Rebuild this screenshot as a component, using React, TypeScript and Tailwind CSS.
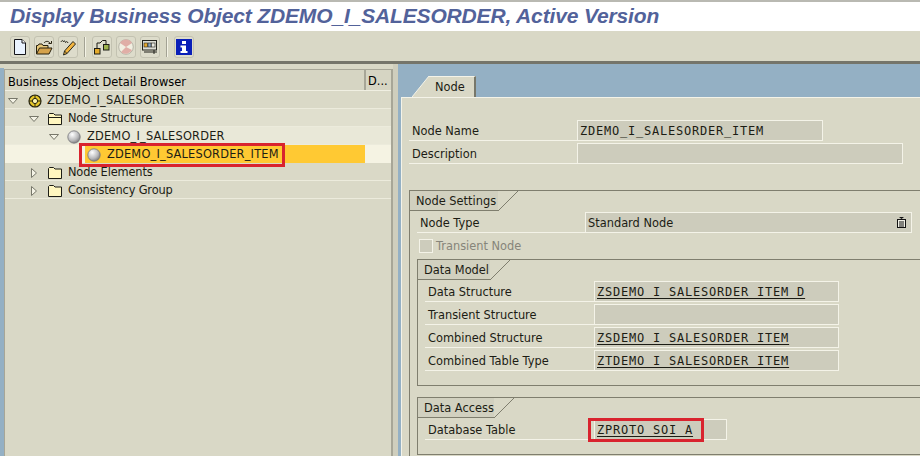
import type { ReactNode } from 'react';

const UI_FONT = "font-['DejaVu_Sans',sans-serif] text-[11.4px]";
const MONO_FONT = "font-['DejaVu_Sans_Mono',monospace] text-[12px] tracking-[0.78px]";

// small triangle used to open and close tree nodes
function Arrow({ open }: { open: boolean }) {
    return (
        <svg width="10" height="10" viewBox="0 0 10 10" className="shrink-0">
            {open ? (
                <path d="M0.5 2.5H9.5L5 7.5Z" fill="#f4f3e6" stroke="#77776a" />
            ) : (
                <path d="M2.5 0.5V9.5L7.5 5Z" fill="#f4f3e6" stroke="#77776a" />
            )}
        </svg>
    );
}

function FolderIcon({ open }: { open?: boolean }) {
    return (
        <svg width="16" height="14" viewBox="0 0 16 14" className="shrink-0">
            <path d="M1.5 12.5V2.5L2.5 1.5H6.5L8 3H14.5V12.5Z" fill="#fff6bf" stroke="#1d1d16" />
            {open && <path d="M1.5 5.5H14.5" stroke="#1d1d16" />}
        </svg>
    );
}

function BallIcon() {
    return (
        <svg width="14" height="14" viewBox="0 0 14 14" className="shrink-0">
            <defs>
                <radialGradient id="ball" cx="0.36" cy="0.3" r="0.8">
                    <stop offset="0" stopColor="#ffffff" />
                    <stop offset="0.6" stopColor="#b9b9bb" />
                    <stop offset="1" stopColor="#6b6c70" />
                </radialGradient>
            </defs>
            <circle cx="7" cy="7" r="6.2" fill="url(#ball)" stroke="#76767a" strokeWidth="0.8" />
        </svg>
    );
}

function ObjectIcon() {
    return (
        <svg width="14" height="14" viewBox="0 0 14 14" className="shrink-0">
            <circle cx="7" cy="7" r="6" fill="#e8c829" stroke="#26240f" strokeWidth="1.2" />
            <circle cx="7" cy="7" r="2.6" fill="#fff7b0" stroke="#26240f" />
            <path d="M7 1V4.4M7 9.6V13M1 7H4.4M9.6 7H13" stroke="#26240f" />
        </svg>
    );
}

function ToolButton({ children }: { children: ReactNode }) {
    return (
        <div className="flex h-[22px] w-[20px] items-center justify-center rounded-[3px] border border-[#c3c2b1] bg-[#dddccb]">
            {children}
        </div>
    );
}

function ToolSeparator() {
    return <div className="mx-[2px] h-[20px] w-[2px] border-l border-[#a3a294] bg-[#f4f3e6]" />;
}

function Toolbar() {
    return (
        <div className="flex h-[30px] shrink-0 items-center gap-[4px] bg-[#d9d8c6] pl-[10px] pt-[2px]">
            <ToolButton>
                <svg width="14" height="16" viewBox="0 0 14 16">
                    <path d="M1.5 0.5H9L12.5 4V15.5H1.5Z" fill="#eaf3ff" stroke="#15151a" />
                    <path d="M9 0.5V4H12.5" fill="#fff" stroke="#15151a" />
                </svg>
            </ToolButton>
            <ToolButton>
                <svg width="17" height="15" viewBox="0 0 17 15">
                    <path d="M0.5 14V5.5H2L3 4H6L7 5.5H12V8" fill="#e8c87a" stroke="#26200f" />
                    <path d="M0.5 14L3.5 8H16L13 14Z" fill="#d5a24b" stroke="#26200f" />
                    <path d="M8 3C9.5 0.8 12.5 0.8 14 3" fill="none" stroke="#26200f" />
                    <path d="M12.5 3.5H15.5V1" fill="none" stroke="#26200f" />
                </svg>
            </ToolButton>
            <ToolButton>
                <svg width="17" height="17" viewBox="0 0 17 17">
                    <path d="M1 3C2 1 3 1 3.5 3C4 1.5 5 1.5 5.5 3.5C6.5 2 7.5 2.5 8 4" fill="none" stroke="#28281e" />
                    <path d="M13 2.5L15.5 5L7 14.5L3.5 16L4.5 12Z" fill="#f3b53f" stroke="#28281e" />
                    <path d="M4.5 12L7 14.5" stroke="#28281e" />
                </svg>
            </ToolButton>
            <ToolSeparator />
            <ToolButton>
                <svg width="16" height="16" viewBox="0 0 16 16">
                    <rect x="0.5" y="9.5" width="5.5" height="5.5" fill="#e4ab2c" stroke="#1c1c14" />
                    <rect x="9.5" y="5.5" width="5.5" height="5.5" fill="#9db24c" stroke="#1c1c14" />
                    <path d="M3 9V4H6L8.5 1.5H12V5.5" fill="none" stroke="#1c1c14" />
                </svg>
            </ToolButton>
            <ToolButton>
                <svg width="16" height="16" viewBox="0 0 16 16">
                    <circle cx="8" cy="8" r="7.3" fill="#f1efe1" stroke="#b5b4a7" />
                    <path d="M8 8L2 4A7 7 0 0 1 14 4Z" fill="#e0aea6" />
                    <path d="M8 8L14 11A7 7 0 0 1 3 13Z" fill="#e0aea6" />
                </svg>
            </ToolButton>
            <ToolButton>
                <svg width="16" height="16" viewBox="0 0 16 16">
                    <rect x="0.5" y="1.5" width="14" height="9.5" fill="#dcdcd4" stroke="#22221c" />
                    <rect x="2" y="4" width="3.5" height="4" fill="#e7a92d" stroke="#22221c" strokeWidth="0.6" />
                    <rect x="6" y="4" width="3" height="4" fill="#8aa7c6" stroke="#22221c" strokeWidth="0.6" />
                    <rect x="9.5" y="4" width="3.5" height="4" fill="#e8e8e0" stroke="#22221c" strokeWidth="0.6" />
                    <path d="M2 13H15M12 11V15" stroke="#22221c" />
                </svg>
            </ToolButton>
            <ToolSeparator />
            <ToolButton>
                <svg width="16" height="16" viewBox="0 0 16 16">
                    <rect width="16" height="16" fill="#0a1fb8" />
                    <rect x="6" y="2" width="4" height="3" fill="#fff" />
                    <path d="M4.5 6.5H10V12H11.5V14H4.5V12H6V8.5H4.5Z" fill="#fff" />
                </svg>
            </ToolButton>
        </div>
    );
}

// one row of the tree, indent is where the arrow or icon starts
function TreeRow({ indent, bg, children }: { indent: number; bg: string; children: ReactNode }) {
    return (
        <div className={`flex h-[18px] items-center border-b border-[#ecebdc] pt-[2px] text-[#1c1c14] ${bg}`} style={{ paddingLeft: indent }}>
            {children}
        </div>
    );
}

function TreePanel() {
    return (
        <div className="mt-[5px] flex w-[389px] flex-col border-t border-l border-r-2 border-[#a7a697] bg-[#d9d8c6]">
            <div className="flex h-[21px] border-b border-[#f0efe2] bg-[#d6d5c3]">
                <div className="flex-1 pl-[3px] pt-[4px]">Business Object Detail Browser</div>
                <div className="w-[27px] border-l-2 border-[#a7a697] pl-[2px] pt-[3px]">D...</div>
            </div>
            <TreeRow indent={3} bg="bg-[#dad9c7]">
                <Arrow open />
                <span className="ml-[10px]"><ObjectIcon /></span>
                <span className="ml-[5px] tracking-[0.2px]">ZDEMO_I_SALESORDER</span>
            </TreeRow>
            <TreeRow indent={24} bg="bg-[#e0dfce]">
                <Arrow open />
                <span className="ml-[8px]"><FolderIcon open /></span>
                <span className="ml-[5px] tracking-[-0.15px]">Node Structure</span>
            </TreeRow>
            <TreeRow indent={44} bg="bg-[#e9e8d8]">
                <Arrow open />
                <span className="ml-[8px]"><BallIcon /></span>
                <span className="ml-[6px] tracking-[0.2px]">ZDEMO_I_SALESORDER</span>
            </TreeRow>
            <div className="flex h-[18px] bg-[#f5f3e3]">
                <div className="ml-[80px] flex w-[280px] items-center bg-[#ffc933] pl-[2px] pt-[2px]">
                    <span className="relative flex items-center pr-[4px]">
                        <BallIcon />
                        <span className="ml-[6px] tracking-[0.2px] text-[#1c1c14]">ZDEMO_I_SALESORDER_ITEM</span>
                        <span className="absolute top-[-3px] bottom-[-3px] left-[-8px] right-[-2px] border-[3px] border-[#d9232e]" />
                    </span>
                </div>
            </div>
            <TreeRow indent={24} bg="bg-[#dad9c7]">
                <Arrow open={false} />
                <span className="ml-[8px]"><FolderIcon /></span>
                <span className="ml-[5px] tracking-[-0.15px]">Node Elements</span>
            </TreeRow>
            <TreeRow indent={24} bg="bg-[#dad9c7]">
                <Arrow open={false} />
                <span className="ml-[8px]"><FolderIcon /></span>
                <span className="ml-[5px] tracking-[-0.15px]">Consistency Group</span>
            </TreeRow>
        </div>
    );
}

// a labelled value row, the label cell has a white line below it
function FieldRow({
    label,
    labelWidth,
    fieldWidth,
    value,
    link,
    mono = true,
    children,
}: {
    label: string;
    labelWidth: number;
    fieldWidth: number;
    value?: string;
    link?: boolean;
    mono?: boolean;
    children?: ReactNode;
}) {
    return (
        <div className="flex h-[21px]">
            <div className="border-b border-[#f4f3e8] pl-[3px] pt-[3px] text-[#1c1c14]" style={{ width: labelWidth }}>
                {label}
            </div>
            <div
                className={`relative h-[21px] border border-[#f4f3e8] bg-[#cdccbc] pl-[2px] pt-[1px] text-[#1c1c14] ${mono ? MONO_FONT : 'pt-[2px]'} ${link ? 'underline underline-offset-[2px]' : ''}`}
                style={{ width: fieldWidth }}
            >
                {value}
                {children}
            </div>
        </div>
    );
}

// group box with the slanted title tab in the top left corner
function Group({ title, tabWidth, className, children }: { title: string; tabWidth: number; className: string; children: ReactNode }) {
    return (
        <div className={`border-t border-l border-b border-[#7f7e6e] ${className}`}>
            <div className="relative h-[20px] border-b border-[#7f7e6e] bg-[#d1d0bf] pl-[6px] pt-[3px] leading-[15px] whitespace-nowrap text-[#1c1c14]" style={{ width: tabWidth }}>
                {title}
                <svg width="20" height="21" viewBox="0 0 20 21" className="absolute top-0 left-full">
                    <path d="M0 0H20L0 20Z" fill="#d9d8c6" />
                    <path d="M0 20L20 0" stroke="#7f7e6e" />
                </svg>
            </div>
            {children}
        </div>
    );
}

function DetailPanel() {
    return (
        <div className="flex flex-1 flex-col overflow-hidden bg-[#94b0c4]">
            <div className="flex h-[33px] shrink-0 items-end pl-[14px]">
                <div className="flex h-[21px]">
                    <svg width="17" height="21" viewBox="0 0 17 21">
                        <path d="M0 21L17 0V21Z" fill="#d9d8c6" />
                        <path d="M0 21L17 0" stroke="#f4f3e8" />
                    </svg>
                    <div className="flex h-[21px] w-[47px] items-center border-t border-r-2 border-t-[#f4f3e8] border-r-[#77776a] bg-[#d9d8c6] pl-[6px] pt-[2px] text-[#1c1c14]">
                        Node
                    </div>
                </div>
            </div>
            <div className="ml-[3px] flex-1 border-t border-l border-[#f4f3e8] bg-[#d9d8c6] pl-[7px] pt-[22px]">
                <FieldRow label="Node Name" labelWidth={168} fieldWidth={246} value="ZDEMO_I_SALESORDER_ITEM" />
                <div className="mt-[2px]">
                    <FieldRow label="Description" labelWidth={168} fieldWidth={326} />
                </div>
                <Group title="Node Settings" tabWidth={88} className="mt-[26px] pb-[40px]">
                    <div className="ml-[7px] mt-[1px]">
                        <FieldRow label="Node Type" labelWidth={168} fieldWidth={327} mono={false} value="Standard Node">
                            <svg width="9" height="11" viewBox="0 0 9 11" className="absolute right-[5px] top-[4px]">
                                <path d="M2 0H7L4.5 2Z" fill="#111" />
                                <rect x="0.5" y="2.5" width="8" height="8" fill="#f0f0e6" stroke="#111" />
                                <path d="M2 5H7M2 7H7M2 9H7" stroke="#111" />
                            </svg>
                        </FieldRow>
                        <div className="mt-[6px] flex h-[14px] items-center text-[#86857a]">
                            <div className="ml-[2px] h-[14px] w-[14px] border border-[#f4f3e8] bg-[#cdccbc]" />
                            <span className="ml-[3px] pt-[2px]">Transient Node</span>
                        </div>
                    </div>
                    <Group title="Data Model" tabWidth={72} className="ml-[7px] mt-[6px] pb-[14px]">
                        <div className="ml-[7px] mt-[1px] flex flex-col gap-[2px]">
                            <FieldRow label="Data Structure" labelWidth={169} fieldWidth={245} value="ZSDEMO_I_SALESORDER_ITEM_D" link />
                            <FieldRow label="Transient Structure" labelWidth={169} fieldWidth={245} />
                            <FieldRow label="Combined Structure" labelWidth={169} fieldWidth={245} value="ZSDEMO_I_SALESORDER_ITEM" link />
                            <FieldRow label="Combined Table Type" labelWidth={169} fieldWidth={245} value="ZTDEMO_I_SALESORDER_ITEM" link />
                        </div>
                    </Group>
                    <div className="mt-[11px]" />
                    <Group title="Data Access" tabWidth={76} className="ml-[7px] pb-[14px]">
                        <div className="relative ml-[7px] mt-[1px]">
                            <FieldRow label="Database Table" labelWidth={169} fieldWidth={133} value="ZPROTO_SOI_A" link />
                            <span className="absolute top-[-1px] left-[163px] h-[24px] w-[116px] border-[3px] border-[#d9232e]" />
                        </div>
                    </Group>
                </Group>
            </div>
        </div>
    );
}

export default function App() {
    return (
        <div className={`flex h-[456px] w-[920px] flex-col overflow-hidden bg-[#d9d8c6] ${UI_FONT}`}>
            <div className="h-[31px] shrink-0 border-t-2 border-[#b9b9b2] bg-white pl-[10px] pt-[1px] font-['Liberation_Sans',sans-serif] text-[21px] leading-[26px] font-bold tracking-[-0.15px] whitespace-nowrap text-[#52629a] italic">
                Display Business Object ZDEMO_I_SALESORDER, Active Version
            </div>
            <Toolbar />
            <div className="flex min-h-0 flex-1 border-t-[3px] border-[#75756a]">
                <div className="flex w-[393px] bg-[#d9d8c6]">
                    <div className="mt-[4px] w-[4px] bg-[#94b0c4]" />
                    <TreePanel />
                </div>
                <div className="w-[5px] bg-[#cfcebd]" />
                <DetailPanel />
            </div>
        </div>
    );
}
